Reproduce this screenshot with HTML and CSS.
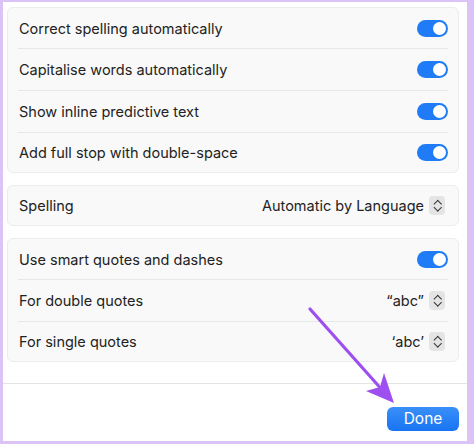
FILE: index.html
```html
<!DOCTYPE html>
<html lang="en">
<head>
    <meta charset="UTF-8">
    <title>Text Input Settings</title>
    <link rel="stylesheet" href="styles.css">
</head>
<body>
    <div class="dialog">
        <div class="groups">
            <div class="group">
                <div class="row">
                    <span class="label">Correct spelling automatically</span>
                    <span class="toggle on"></span>
                </div>
                <div class="row">
                    <span class="label">Capitalise words automatically</span>
                    <span class="toggle on"></span>
                </div>
                <div class="row">
                    <span class="label">Show inline predictive text</span>
                    <span class="toggle on"></span>
                </div>
                <div class="row">
                    <span class="label">Add full stop with double-space</span>
                    <span class="toggle on"></span>
                </div>
            </div>

            <div class="group">
                <div class="row single">
                    <span class="label">Spelling</span>
                    <span class="popup">Automatic by Language <span class="stepper"></span></span>
                </div>
            </div>

            <div class="group">
                <div class="row">
                    <span class="label">Use smart quotes and dashes</span>
                    <span class="toggle on"></span>
                </div>
                <div class="row">
                    <span class="label">For double quotes</span>
                    <span class="popup">“abc” <span class="stepper"></span></span>
                </div>
                <div class="row">
                    <span class="label">For single quotes</span>
                    <span class="popup">‘abc’ <span class="stepper"></span></span>
                </div>
            </div>
        </div>

        <div class="footer">
            <button class="done-btn">Done</button>
        </div>

        <!-- annotation arrow pointing at Done -->
        <svg class="arrow" width="474" height="444" viewBox="0 0 474 444">
            <line x1="310" y1="309" x2="384" y2="392" stroke="#9d4ff0" stroke-width="3.2" stroke-linecap="round"/>
            <polygon points="394,403 366,391 380,387 384,373" fill="#9d4ff0"/>
        </svg>
    </div>
</body>
</html>
```

FILE: styles.css
```css
* {
    margin: 0;
    padding: 0;
    box-sizing: border-box;
}

body {
    width: 474px;
    height: 444px;
    background: #dcc3f6;
    padding: 2px 7px 3px 3px;
    font-family: 'Inter', 'Liberation Sans', sans-serif;
    color: #222222;
}

.dialog {
    background: #ffffff;
    height: 100%;
    display: flex;
    flex-direction: column;
}

.groups {
    padding: 5px 8px 0 4px;
    display: flex;
    flex-direction: column;
    gap: 12px;
}

.group {
    background: #f9f9f9;
    border: 1px solid #ececec;
    border-radius: 6px;
    padding: 0 10px;
}

.row {
    height: 42px;
    display: flex;
    align-items: center;
    justify-content: space-between;
    padding: 0 0 0 1px;
    border-bottom: 1px solid #e8e8e8;
    font-size: 14.5px;
}

.row:first-child {
    height: 41px;
}

.row:last-child {
    height: 39px;
    border-bottom: none;
}

.row.single {
    height: 39px;
}

.toggle {
    width: 31px;
    height: 17px;
    border-radius: 9px;
    background: #d6d6d6;
    position: relative;
}

.toggle.on {
    background: #1f7cf6;
}

.toggle::after {
    content: '';
    position: absolute;
    top: 2px;
    left: 2px;
    width: 13px;
    height: 13px;
    border-radius: 50%;
    background: #ffffff;
}

.toggle.on::after {
    left: 16px;
}

.popup {
    display: flex;
    align-items: center;
    gap: 5px;
}

.stepper {
    width: 16px;
    height: 19px;
    border-radius: 4px;
    background: #e4e4e4;
    position: relative;
    margin-right: 3px;
}

.stepper::before,
.stepper::after {
    content: '';
    position: absolute;
    left: 5.5px;
    width: 4.5px;
    height: 4.5px;
    border-left: 1.7px solid #333;
    border-top: 1.7px solid #333;
}

.stepper::before {
    top: 4.5px;
    transform: rotate(45deg);
}

.stepper::after {
    top: 9px;
    transform: rotate(225deg);
}

.footer {
    margin-top: auto;
    border-top: 1px solid #e3e3e3;
    height: 58px;
    display: flex;
    justify-content: flex-end;
    align-items: center;
    padding: 0 8px 0 0;
}

.done-btn {
    width: 72px;
    height: 24px;
    border: none;
    border-radius: 6px;
    background: linear-gradient(#3a8ff8, #1874f2);
    color: #ffffff;
    font-family: 'Inter', 'Liberation Sans', sans-serif;
    font-size: 15.5px;
    margin-top: 12px;
}

.arrow {
    position: absolute;
    top: 0;
    left: 0;
    pointer-events: none;
}
```
